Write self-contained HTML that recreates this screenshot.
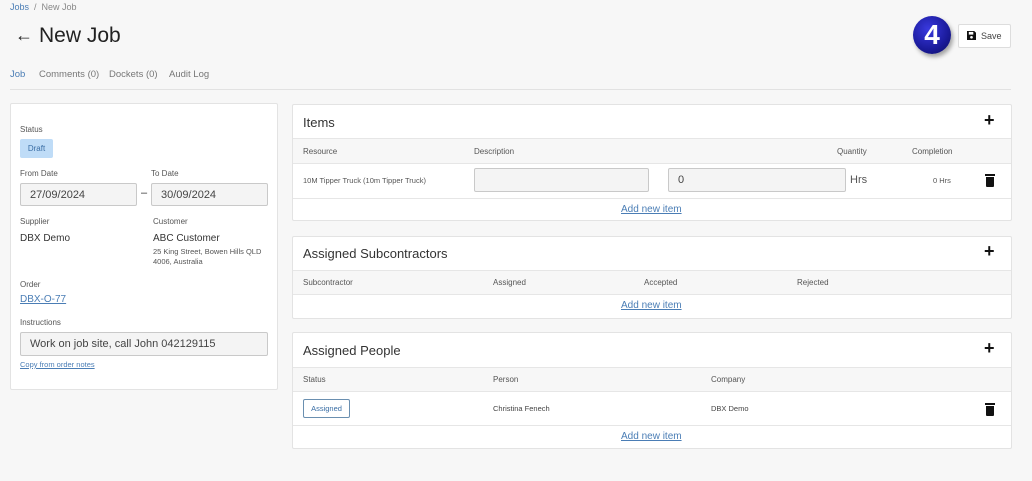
<!DOCTYPE html>
<html><head><style>
*{margin:0;padding:0;box-sizing:border-box}
body{width:1032px;height:481px;background:#f7f7f7;font-family:"Liberation Sans",sans-serif;color:#333;position:relative;overflow:hidden}
.a{position:absolute;white-space:nowrap}
.card{position:absolute;background:#fff;border:1px solid #e3e3e3;border-radius:2px}
.lbl{font-size:8px;color:#555}
.inp{position:absolute;background:#f4f4f4;border:1px solid #c9c9c9;border-radius:2px;font-size:11px;color:#444;padding-left:9px;display:flex;align-items:center}
.hr{position:absolute;left:0;right:0;border-top:1px solid #e6e6e6}
.gr{position:absolute;left:0;right:0;background:#f7f7f7}
.link{color:#4a7db5;text-decoration:underline}
.h{font-size:13px;color:#333}
.plus{font-size:18px;color:#111;font-weight:bold}
.sm{font-size:7.5px;color:#555}
.bin{position:absolute;width:8px;height:10px;background:#111;border-radius:0 0 1px 1px}
.bin:before{content:"";position:absolute;left:-1px;top:-3px;width:10px;height:2px;background:#111}
</style></head><body>
<div class="a" style="left:10px;top:2px;font-size:9px;color:#888"><span style="color:#4a7db5">Jobs</span> &nbsp;/&nbsp; New Job</div>
<div class="a" style="left:15px;top:25px;font-size:18px;color:#222">←</div>
<div class="a" style="left:39px;top:24px;font-size:21px;color:#222">New Job</div>
<div class="a" style="left:10px;top:69px;font-size:9.5px;color:#4a7db5">Job</div>
<div class="a" style="left:39px;top:69px;font-size:9.5px;color:#777">Comments (0)</div>
<div class="a" style="left:109px;top:69px;font-size:9.5px;color:#777">Dockets (0)</div>
<div class="a" style="left:169px;top:69px;font-size:9.5px;color:#777">Audit Log</div>
<div class="a" style="left:10px;top:89px;width:1001px;border-top:1px solid #e2e2e2"></div>
<div class="a" style="left:913px;top:16px;width:38px;height:38px;border-radius:50%;background:radial-gradient(circle at 40% 35%,#3a3ae0,#1a1a9a 60%,#0c0c5a);box-shadow:2px 3px 4px rgba(0,0,0,.35);color:#fff;font-weight:bold;font-size:28px;text-align:center;line-height:38px">4</div>
<div class="a" style="left:958px;top:24px;width:53px;height:24px;background:#fff;border:1px solid #ddd;border-radius:2px;font-size:9px;color:#444;line-height:22px;padding-left:8px">
<svg width="9" height="9" viewBox="0 0 10 10" style="vertical-align:-1px"><path d="M0 0h8l2 2v8H0z" fill="#111"/><rect x="2" y="1" width="5" height="3" fill="#fff"/><circle cx="5" cy="7" r="1.5" fill="#fff"/></svg>&nbsp;&nbsp;Save</div>

<div class="card" style="left:10px;top:103px;width:268px;height:287px">
<div class="a lbl" style="left:9px;top:21px">Status</div>
<div class="a" style="left:9px;top:35px;width:33px;height:19px;background:#bfdcf7;border-radius:2px;font-size:8px;color:#3a6ea5;text-align:center;line-height:19px">Draft</div>
<div class="a lbl" style="left:9px;top:65px">From Date</div>
<div class="a lbl" style="left:140px;top:65px">To Date</div>
<div class="inp" style="left:9px;top:79px;width:117px;height:23px">27/09/2024</div>
<div class="a" style="left:130px;top:83px;font-size:11px">–</div>
<div class="inp" style="left:140px;top:79px;width:117px;height:23px">30/09/2024</div>
<div class="a lbl" style="left:9px;top:113px">Supplier</div>
<div class="a lbl" style="left:142px;top:113px">Customer</div>
<div class="a" style="left:9px;top:129px;font-size:10px;color:#333">DBX Demo</div>
<div class="a" style="left:142px;top:129px;font-size:10px;color:#333">ABC Customer</div>
<div class="a sm" style="left:142px;top:143px;line-height:10px">25 King Street, Bowen Hills QLD<br>4006, Australia</div>
<div class="a lbl" style="left:9px;top:176px">Order</div>
<div class="a link" style="left:9px;top:190px;font-size:10px">DBX-O-77</div>
<div class="a lbl" style="left:9px;top:214px">Instructions</div>
<div class="inp" style="left:9px;top:228px;width:248px;height:24px">Work on job site, call John 042129115</div>
<div class="a link" style="left:9px;top:256px;font-size:7.5px">Copy from order notes</div>
</div>

<div class="card" style="left:292px;top:104px;width:720px;height:117px">
<div class="a h" style="left:10px;top:10px">Items</div><div class="a plus" style="left:691px;top:5px">+</div>
<div class="gr" style="top:33px;height:25px"></div>
<div class="hr" style="top:33px"></div><div class="hr" style="top:58px"></div><div class="hr" style="top:93px"></div>
<div class="a lbl" style="left:10px;top:42px">Resource</div>
<div class="a lbl" style="left:181px;top:42px">Description</div>
<div class="a lbl" style="left:544px;top:42px">Quantity</div>
<div class="a lbl" style="left:619px;top:42px">Completion</div>
<div class="a sm" style="left:10px;top:71px">10M Tipper Truck (10m Tipper Truck)</div>
<div class="inp" style="left:181px;top:63px;width:175px;height:24px"></div>
<div class="inp" style="left:375px;top:63px;width:178px;height:24px">0</div>
<div class="a" style="left:557px;top:69px;font-size:11px;color:#555">Hrs</div>
<div class="a sm" style="left:640px;top:71px">0 Hrs</div>
<div class="bin" style="left:693px;top:72px"></div>
<div class="a link" style="left:328px;top:99px;font-size:10px">Add new item</div>
</div>

<div class="card" style="left:292px;top:236px;width:720px;height:83px">
<div class="a h" style="left:10px;top:9px">Assigned Subcontractors</div><div class="a plus" style="left:691px;top:4px">+</div>
<div class="gr" style="top:33px;height:24px"></div>
<div class="hr" style="top:33px"></div><div class="hr" style="top:57px"></div>
<div class="a lbl" style="left:10px;top:41px">Subcontractor</div>
<div class="a lbl" style="left:200px;top:41px">Assigned</div>
<div class="a lbl" style="left:351px;top:41px">Accepted</div>
<div class="a lbl" style="left:504px;top:41px">Rejected</div>
<div class="a link" style="left:328px;top:63px;font-size:10px">Add new item</div>
</div>

<div class="card" style="left:292px;top:332px;width:720px;height:117px">
<div class="a h" style="left:10px;top:10px">Assigned People</div><div class="a plus" style="left:691px;top:5px">+</div>
<div class="gr" style="top:34px;height:24px"></div>
<div class="hr" style="top:34px"></div><div class="hr" style="top:58px"></div><div class="hr" style="top:92px"></div>
<div class="a lbl" style="left:10px;top:42px">Status</div>
<div class="a lbl" style="left:200px;top:42px">Person</div>
<div class="a lbl" style="left:418px;top:42px">Company</div>
<div class="a" style="left:10px;top:66px;width:47px;height:19px;border:1px solid #6a8fb0;border-radius:2px;font-size:7.5px;color:#3a6ea5;text-align:center;line-height:17px">Assigned</div>
<div class="a sm" style="left:200px;top:71px;color:#444">Christina Fenech</div>
<div class="a sm" style="left:418px;top:71px;color:#444">DBX Demo</div>
<div class="bin" style="left:693px;top:73px"></div>
<div class="a link" style="left:328px;top:98px;font-size:10px">Add new item</div>
</div>
</body></html>
